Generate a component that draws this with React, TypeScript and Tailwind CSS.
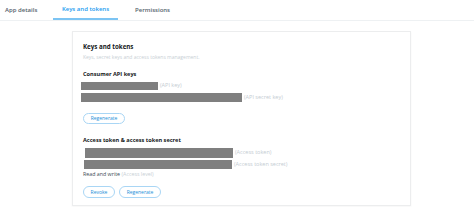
import React from 'react';

const font = { fontFamily: '"Open Sans", "Liberation Sans", sans-serif' };

function KeyRow({ barClass, label }: { barClass: string; label: string }) {
  return (
    <div className="flex items-center">
      <div className={`bg-[#7f7f7f] ${barClass}`} />
      <span className="ml-[2px] text-[5.5px] leading-none text-[#c4ccd2]">{label}</span>
    </div>
  );
}

function PillButton({ children, className = '' }: { children: React.ReactNode; className?: string }) {
  return (
    <button
      className={`rounded-full border border-[#a9d6f5] bg-white text-[5px] leading-none text-[#1d8fd8] ${className}`}
    >
      {children}
    </button>
  );
}

export default function App() {
  return (
    <div className="w-[474px] h-[207px] overflow-hidden bg-white" style={font}>
      <nav className="flex h-[21px] items-stretch border-b border-[#eef1f3] text-[6px] font-semibold">
        <div className="flex w-[40px] items-center pl-[5px] text-[#55636d]">App details</div>
        <div className="ml-[13px] flex w-[65px] items-center justify-center border-b-2 border-[#7cc4f3] text-[#1d9bf0]">
          Keys and tokens
        </div>
        <div className="ml-[17px] flex items-center text-[#55636d]">Permissions</div>
      </nav>

      <div className="ml-[72px] mt-[10px] h-[175px] w-[339px] border border-[#ecedee] shadow-[0_1px_2px_rgba(0,0,0,0.04)] px-[10px] pt-[10px]">
        <h2 className="text-[6.2px] font-bold leading-[9px] text-[#14171a]">Keys and tokens</h2>
        <p className="mt-[2px] text-[5px] leading-[9px] text-[#c8cfd5]">
          Keys, secret keys and access tokens management.
        </p>

        <h3 className="mt-[8px] text-[5.6px] font-bold leading-[9px] text-[#14171a]">Consumer API keys</h3>
        <div className="mt-[3px] -ml-[2px] flex flex-col gap-[3px]">
          <KeyRow barClass="h-[8px] w-[77px]" label="(API key)" />
          <KeyRow barClass="h-[9px] w-[161px]" label="(API secret key)" />
        </div>
        <PillButton className="mt-[8px] h-[11px] w-[42px]">Regenerate</PillButton>

        <h3 className="mt-[10px] text-[5.6px] font-bold leading-[9px] text-[#14171a]">
          Access token &amp; access token secret
        </h3>
        <div className="mt-[3px] flex flex-col gap-[2px]">
          <div className="ml-[2px]">
            <KeyRow barClass="h-[10px] w-[148px]" label="(Access token)" />
          </div>
          <div className="ml-[1px]">
            <KeyRow barClass="h-[9px] w-[148px]" label="(Access token secret)" />
          </div>
        </div>
        <p className="mt-[1px] text-[5.3px] leading-[9px] text-[#3d4b55]">
          Read and write <span className="text-[#c8cfd5]">(Access level)</span>
        </p>
        <div className="mt-[7px] flex gap-[4px]">
          <PillButton className="h-[12px] w-[32px]">Revoke</PillButton>
          <PillButton className="h-[12px] w-[42px]">Regenerate</PillButton>
        </div>
      </div>
    </div>
  );
}
